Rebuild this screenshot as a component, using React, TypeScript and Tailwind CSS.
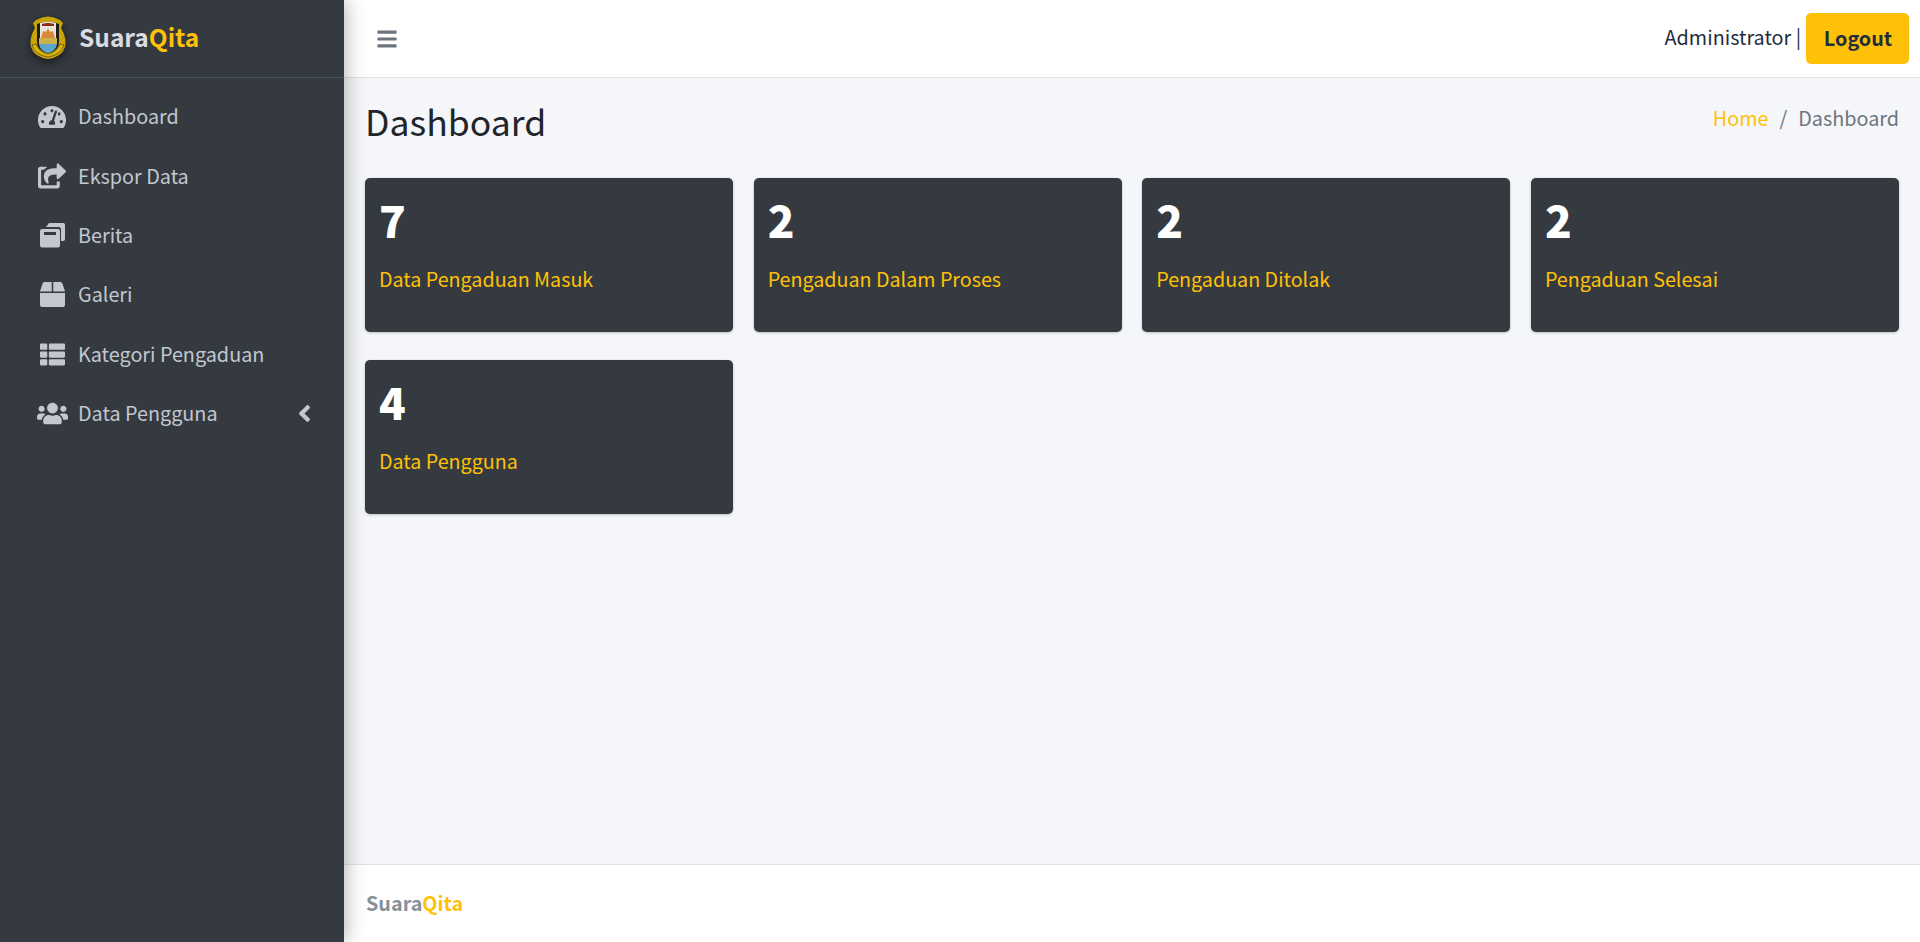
import { FaTachometerAlt, FaShareSquare, FaBox, FaThList, FaUsers, FaAngleLeft, FaBars } from 'react-icons/fa';

// window-restore glyph as it appears in the sidebar: solid front pane, back pane peeking out
const WindowRestore = ({ size }: { size: number }) => (
  <svg width={size} height={size} viewBox="0 0 25 25" fill="currentColor">
    <path d="M8 1.5 A1.5 1.5 0 0 1 9.500 0 H23 A2 2 0 0 1 25 2 V16 A2 2 0 0 1 23 18 H21 V6.500 A2.500 2.500 0 0 0 18.500 4 H6 Z" />
    <path fillRule="evenodd" d="M2 6 H18 A2 2 0 0 1 20 8 V22.500 A2 2 0 0 1 18 24.500 H2 A2 2 0 0 1 0 22.500 V8 A2 2 0 0 1 2 6 Z M4 9 V12 H16 V9 Z" />
  </svg>
);

const menu = [
  { label: 'Dashboard', Icon: FaTachometerAlt, size: 28 },
  { label: 'Ekspor Data', Icon: FaShareSquare, size: 28 },
  { label: 'Berita', Icon: WindowRestore, size: 25 },
  { label: 'Galeri', Icon: FaBox, size: 25 },
  { label: 'Kategori Pengaduan', Icon: FaThList, size: 25 },
  { label: 'Data Pengguna', Icon: FaUsers, size: 31 },
];

const stats = [
  { value: 7, label: 'Data Pengaduan Masuk' },
  { value: 2, label: 'Pengaduan Dalam Proses' },
  { value: 2, label: 'Pengaduan Ditolak' },
  { value: 2, label: 'Pengaduan Selesai' },
  { value: 4, label: 'Data Pengguna' },
];

const Crest = () => (
  <svg width="38" height="46" viewBox="0 0 38 46" className="drop-shadow-[0_4px_5px_rgba(0,0,0,0.5)]">
    <path d="M7 6 Q19 -1 31 6 L34 9 L32 14 Q38 24 36 33 Q33 43 19 45 Q5 43 2 33 Q0 24 6 14 L4 9 Z" fill="#c9a206" />
    <path d="M8 10 Q19 5 30 10 L30 28 Q30 37 19 39 Q8 37 8 28 Z" fill="#1f1d1a" />
    <path d="M11 9 Q19 6 27 9 L27 30 L11 30 Z" fill="#e8e4da" />
    <path d="M13 10 Q19 8 25 10 L25 12 L13 12 Z" fill="#8b2a1c" />
    <path d="M12 24 L14 17 L17 18 L19 14 L21 18 L24 17 L26 24 Z" fill="#d98a3a" />
    <rect x="10" y="24" width="18" height="6" fill="#c9b24a" />
    <path d="M10 30 H28 Q27 37 19 39 Q11 37 10 30 Z" fill="#5ba7d1" />
    <path d="M3 31 Q6 41 19 43 Q32 41 35 31 L31 30 Q28 38 19 40 Q10 38 7 30 Z" fill="#d8b512" stroke="#3a3008" strokeWidth="0.6" />
  </svg>
);

export default function App() {
  return (
    <div className="flex h-screen overflow-hidden bg-[#f4f6f9] font-['Noto_Sans_CJK_SC','Noto_Sans',sans-serif] text-[19.8px] text-[#212529]">
      <aside className="relative z-10 flex w-[344px] shrink-0 flex-col bg-[#343a40] shadow-[0_0_20px_rgba(0,0,0,0.35)]">
        <div className="flex h-[78px] items-center gap-[12px] border-b border-[#4b545c] pl-[29px] pb-[3px]">
          <Crest />
          <span className="text-[24.5px] leading-none font-bold text-[#d9dce1]">
            Suara<span className="text-[#ffc107]">Qita</span>
          </span>
        </div>
        <nav className="flex flex-col pt-[9px]">
          {menu.map(({ label, Icon, size }, i) => (
            <a key={label} className="flex h-[59.4px] items-center pl-[36px] pr-[26px] text-[#c2c7d0]">
              <span className="flex w-[32px] justify-center">
                <Icon size={size} />
              </span>
              <span className="ml-[10px] pb-[1px] text-[19.8px] leading-none">{label}</span>
              {i === menu.length - 1 && <FaAngleLeft size={27} className="ml-auto" />}
            </a>
          ))}
        </nav>
      </aside>

      <div className="flex min-w-0 flex-1 flex-col">
        <header className="flex h-[78px] shrink-0 items-center justify-between border-b border-[#dee2e6] bg-white pl-[32px] pr-[11px]">
          <FaBars size={22} className="text-[#6c757d]" />
          <div className="flex items-center gap-[5px]">
            <span className="pb-[4px] text-[19.8px] leading-none text-[#1f2d3d]">Administrator |</span>
            <button className="h-[51px] w-[103px] rounded-[5px] bg-[#ffc107] pb-[2px] pl-[1px] text-[19.8px] font-bold text-[#1f2d3d]">Logout</button>
          </div>
        </header>

        <main className="flex-1 px-[21px]">
          <div className="flex h-[100px] items-start justify-between">
            <h1 className="pt-[25px] text-[35.6px] leading-none font-normal">Dashboard</h1>
            <div className="flex items-center gap-[11px] pt-[30px] text-[19.8px] leading-none">
              <span className="text-[#ffc107]">Home</span>
              <span className="text-[#6c757d]">/</span>
              <span className="text-[#6c757d]">Dashboard</span>
            </div>
          </div>
          <div className="grid grid-cols-4 gap-x-[20.5px] gap-y-[28px]">
            {stats.map((s) => (
              <div key={s.label} className="h-[154px] rounded-[5px] bg-[#343a40] px-[14px] pt-[14px] shadow-[0_0_1px_rgba(0,0,0,0.125),0_1px_3px_rgba(0,0,0,0.2)]">
                <div className="text-[44px] leading-[55px] font-black text-white">{s.value}</div>
                <p className="mt-[17px] text-[19.7px] leading-[30px] text-[#ffc107]">{s.label}</p>
              </div>
            ))}
          </div>
        </main>

        <footer className="flex h-[78px] shrink-0 items-center border-t border-[#dee2e6] bg-white pl-[22px]">
          <span className="pb-[2px] text-[19.8px] leading-none font-bold text-[#869099]">
            Suara<span className="text-[#ffc107]">Qita</span>
          </span>
        </footer>
      </div>
    </div>
  );
}
